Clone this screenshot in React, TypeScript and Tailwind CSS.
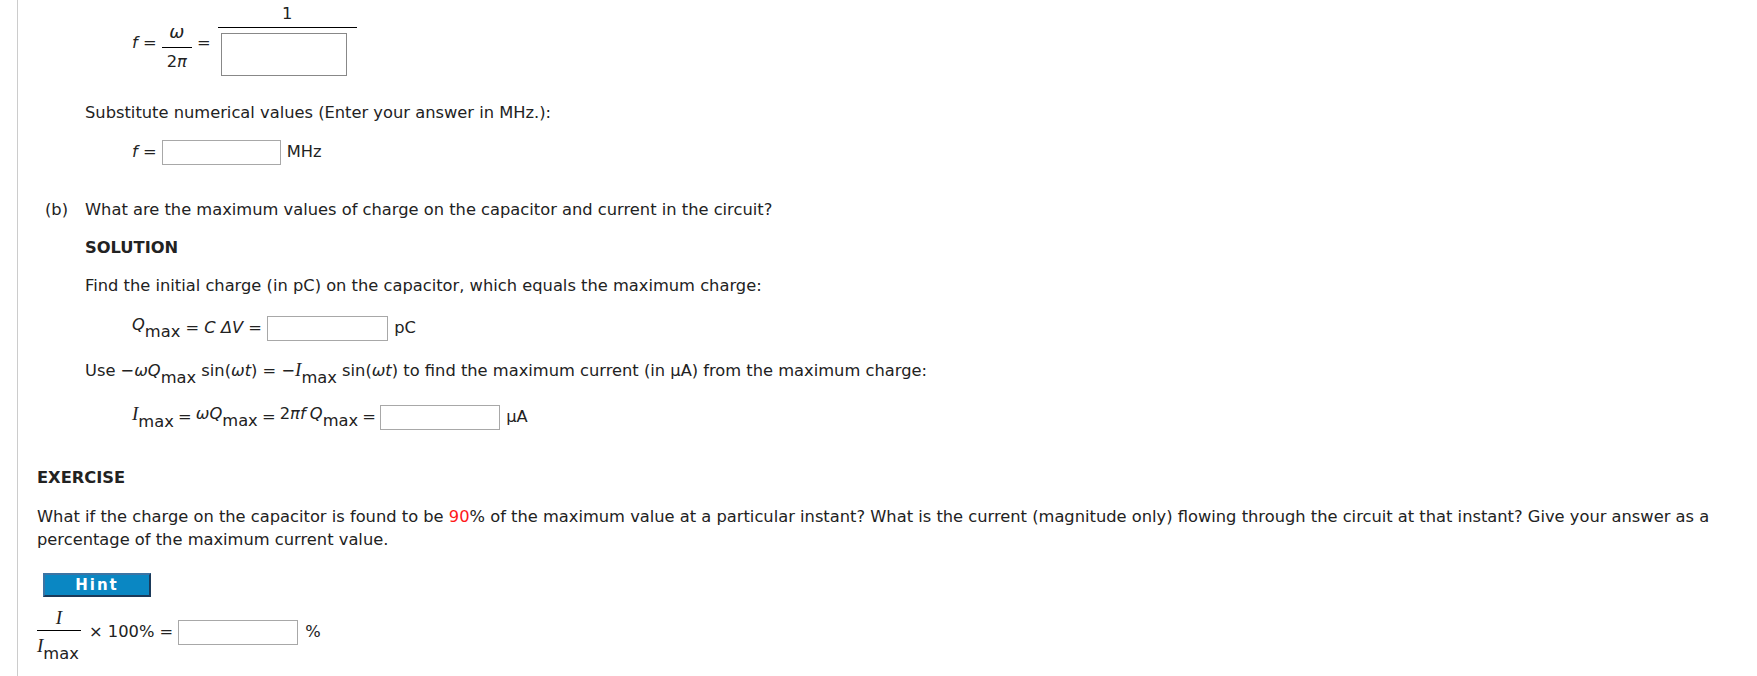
import React from 'react'

// shared bits of inline math
const M = ({ children }: { children: React.ReactNode }) => (
  <span className="italic font-['DejaVu_Sans',Verdana,sans-serif]">{children}</span>
)
const SerifI = () => <span className="italic font-['Liberation_Serif','Times_New_Roman',serif] text-[19px]">I</span>
const Sub = ({ children }: { children: React.ReactNode }) => <span className="align-[-7px]">{children}</span>

function AnswerBox({ w = 'w-[120px]' }: { w?: string }) {
  return <span className={`inline-block h-[25px] ${w} border border-[#a8a8a8] bg-white`} />
}

export default function App() {
  return (
    <div className="min-h-[676px] bg-white text-[16.3px] text-[#222] font-['DejaVu_Sans',Verdana,sans-serif]">
      <div className="ml-[17px] min-h-[676px] border-l border-[#cccccc] pl-[19px]">
        {/* f = w / 2pi = 1 / [box] */}
        <div className="flex items-start pl-[95px]">
          <div className="mt-[14px] flex items-center whitespace-pre">
            <M>f</M>
            <span> = </span>
            <div className="flex flex-col items-center">
              <div className="w-[30px] border-b border-black pt-[8px] pb-[5px] text-center leading-[20px] text-[18px]">
                <M>ω</M>
              </div>
              <div className="pt-[4px] text-center leading-[20px]">
                2<M>π</M>
              </div>
            </div>
            <span> = </span>
          </div>
          <div className="ml-[2px] flex w-[139px] flex-col">
            <div className="h-[28px] border-b border-black pt-[3px] text-center leading-[22px]">1</div>
            <div className="mt-[5px] ml-[3px] h-[43px] w-[126px] border border-[#888]" />
          </div>
        </div>

        <p className="mt-[25px] h-[23px] pl-[48px] leading-[23px]">Substitute numerical values (Enter your answer in MHz.):</p>

        <div className="mt-[16px] flex h-[25px] items-center whitespace-pre pl-[95px]">
          <M>f</M>
          <span> = </span>
          <AnswerBox w="w-[119px]" />
          <span className="ml-[6px]">MHz</span>
        </div>

        <div className="mt-[33px] flex h-[23px] leading-[23px]">
          <span className="w-[48px] pl-[8px]">(b)</span>
          <span>What are the maximum values of charge on the capacitor and current in the circuit?</span>
        </div>

        <p className="mt-[15px] h-[23px] pl-[48px] font-bold leading-[23px]">SOLUTION</p>

        <p className="mt-[15px] h-[23px] pl-[48px] leading-[23px]">
          Find the initial charge (in pC) on the capacitor, which equals the maximum charge:
        </p>

        <div className="mt-[19px] flex h-[25px] items-center whitespace-pre pl-[95px]">
          <span>
            <M>Q</M>
            <Sub>max</Sub>
          </span>
          <span> = </span>
          <M>C</M>
          <span> </span>
          <M>ΔV</M>
          <span> = </span>
          <AnswerBox w="w-[121px]" />
          <span className="ml-[6px]">pC</span>
        </div>

        <p className="mt-[17px] h-[23px] whitespace-pre pl-[48px] leading-[23px]">
          Use −<M>ωQ</M>
          <Sub>max</Sub> sin(<M>ωt</M>) = −<SerifI />
          <Sub>max</Sub> sin(<M>ωt</M>) to find the maximum current (in µA) from the maximum charge:
        </p>

        <div className="mt-[24px] flex h-[25px] items-center whitespace-pre pl-[95px] [word-spacing:-1px]">
          <span>
            <SerifI />
            <Sub>max</Sub>
          </span>
          <span> = </span>
          <span>
            <M>ωQ</M>
            <Sub>max</Sub>
          </span>
          <span> = </span>
          <span>
            2<M>πf</M> <M>Q</M>
            <Sub>max</Sub>
          </span>
          <span> = </span>
          <AnswerBox />
          <span className="ml-[6px]">µA</span>
        </div>

        <p className="mt-[36px] h-[23px] font-bold leading-[23px]">EXERCISE</p>

        <p className="mt-[16px] pr-[10px] leading-[23px]">
          What if the charge on the capacitor is found to be <span className="text-[#ff1a1a]">90</span>% of the maximum
          value at a particular instant? What is the current (magnitude only) flowing through the circuit at that
          instant? Give your answer as a percentage of the maximum current value.
        </p>

        <button
          type="button"
          className="mt-[22px] ml-[6px] flex h-[24px] w-[108px] items-center justify-center border-2 border-t-[#3c74a4] border-l-[#3c74a4] border-r-[#1b3a5a] border-b-[#1b3a5a] bg-[#0a87c3] text-[15px] font-bold tracking-[2px] text-white"
        >
          Hint
        </button>

        <div className="mt-[10px] flex items-center whitespace-pre">
          <div className="flex w-[44px] flex-col">
            <div className="h-[24px] border-b border-black text-center leading-[22px]">
              <SerifI />
            </div>
            <div className="h-[26px] pt-[4px] leading-[22px]">
              <SerifI />
              <Sub>max</Sub>
            </div>
          </div>
          <span className="ml-[8px]">× 100% = </span>
          <AnswerBox />
          <span className="ml-[7px]">%</span>
        </div>
      </div>
    </div>
  )
}
